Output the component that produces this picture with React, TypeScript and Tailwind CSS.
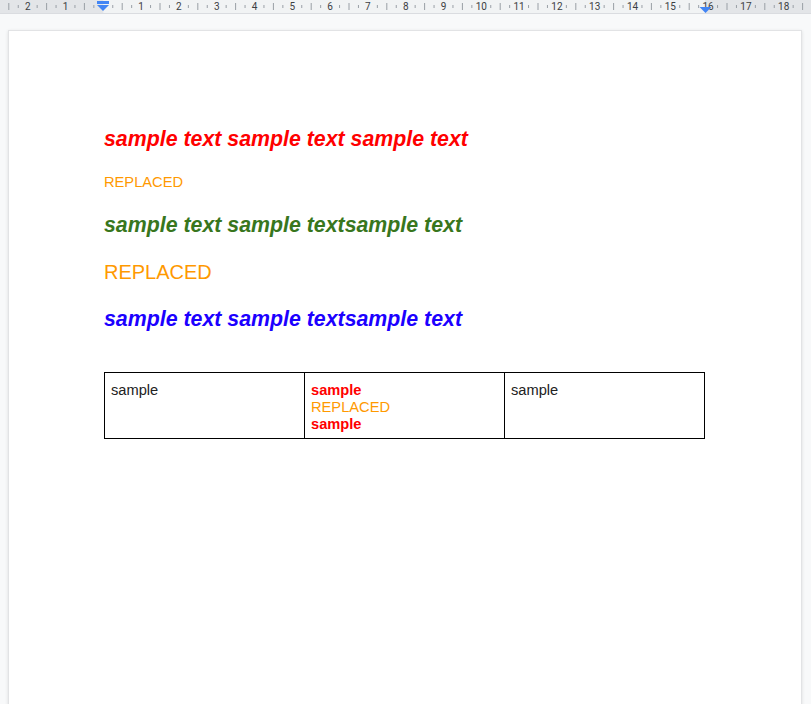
const CM = 37.8
const ORIGIN = 103.3

function Ruler() {
  const ticks: { x: number; kind: 'num' | 'half' | 'quarter'; n: number }[] = []
  for (let q = -11; q <= 76; q++) {
    const x = ORIGIN + (q * CM) / 4
    if (x < 0 || x > 811) continue
    if (q % 4 === 0) ticks.push({ x, kind: 'num', n: Math.abs(q / 4) })
    else if (q % 2 === 0) ticks.push({ x, kind: 'half', n: 0 })
    else ticks.push({ x, kind: 'quarter', n: 0 })
  }
  return (
    <div className="relative h-[14px] border-b border-[#dadce0] bg-[#f1f3f4]">
      <svg width="811" height="13" className="absolute left-0 top-0">
        <rect x="0" y="0" width={ORIGIN} height="13" fill="#e3e5e8" />
        <rect x="705" y="0" width="106" height="13" fill="#e3e5e8" />
        {ticks.map((t, i) =>
          t.kind === 'num' ? (
            t.n === 0 ? null : (
              <text
                key={i}
                x={t.x}
                y="10"
                textAnchor="middle"
                fontSize="10"
                fontFamily="Roboto, 'Liberation Sans', sans-serif"
                fill="#3c4043"
              >
                {t.n}
              </text>
            )
          ) : t.kind === 'half' ? (
            <rect key={i} x={t.x - 0.5} y="3" width="1" height="7" fill="#9aa0a6" />
          ) : (
            <rect key={i} x={t.x - 0.5} y="5" width="1" height="3" fill="#9aa0a6" />
          )
        )}
        {/* left indent markers */}
        <rect x="97" y="1" width="12" height="3" fill="#4285f4" />
        <path d="M97 5 L109 5 L103 11 Z" fill="#4285f4" />
        {/* right indent marker */}
        <path d="M699.5 7 L711.5 7 L705.5 13 Z" fill="#4285f4" />
      </svg>
    </div>
  )
}

export default function App() {
  return (
    <div className="h-[704px] w-[811px] overflow-hidden bg-[#f8f9fa] font-['Liberation_Sans',Arial,sans-serif]">
      <Ruler />
      <div className="pt-[16px]">
        <div className="ml-[8px] h-[700px] w-[794px] border border-[#e2e3e5] bg-white pl-[95px] pt-[96px] shadow-[0_1px_3px_rgba(60,64,67,0.15)]">
          <p className="text-[21.33px] leading-[24.53px] font-bold italic text-[#ff0000]">
            sample text sample text sample text
          </p>
          <p className="mt-[22px] text-[14.67px] leading-[16.87px] text-[#ff9900]">REPLACED</p>
          <p className="mt-[23px] text-[21.33px] leading-[24.53px] font-bold italic text-[#38761d]">
            sample text sample textsample text
          </p>
          <p className="mt-[23px] text-[20px] leading-[23px] text-[#ff9900]">REPLACED</p>
          <p className="mt-[23px] text-[21.33px] leading-[24.53px] font-bold italic text-[#1c00ff]">
            sample text sample textsample text
          </p>

          <table className="mt-[41px] w-[600px] table-fixed border-collapse text-[14.67px] leading-[16.87px]">
            <tbody>
              <tr>
                <td className="w-[200px] border border-black px-[6px] pt-[9px] pb-[5px] align-top text-[#222]">
                  sample
                </td>
                <td className="w-[200px] border border-black px-[6px] pt-[9px] pb-[5px] align-top">
                  <div className="font-bold text-[#ff0000]">sample</div>
                  <div className="text-[#ff9900]">REPLACED</div>
                  <div className="font-bold text-[#ff0000]">sample</div>
                </td>
                <td className="w-[200px] border border-black px-[6px] pt-[9px] pb-[5px] align-top text-[#222]">
                  sample
                </td>
              </tr>
            </tbody>
          </table>
        </div>
      </div>
    </div>
  )
}
